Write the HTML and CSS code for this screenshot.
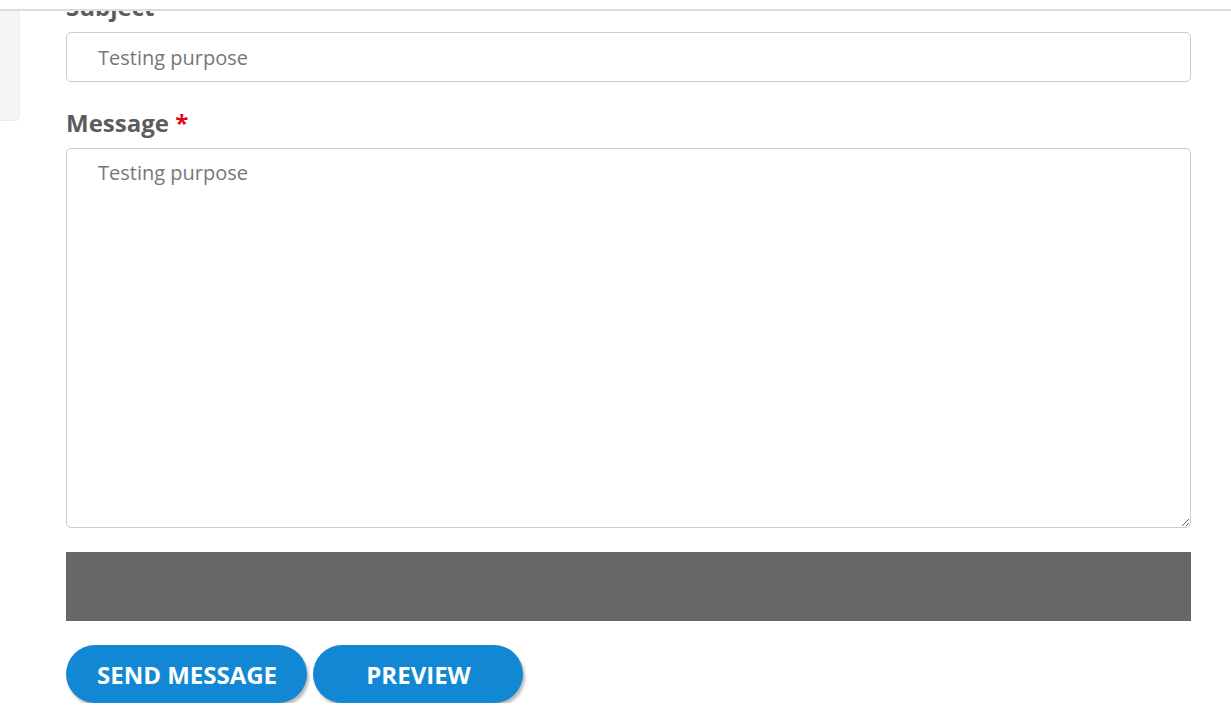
FILE: index.html
```html
<!DOCTYPE html>
<html lang="en">
<head>
<meta charset="utf-8">
<title>Contact form</title>
<link rel="stylesheet" href="styles.css">
</head>
<body>
<div class="topbar"></div>
<div class="page">
  <aside class="sidebar"></aside>
  <form class="form">
    <div class="group">
      <label class="label" for="subject">Subject</label>
      <input class="input" id="subject" type="text" value="Testing purpose">
    </div>
    <div class="group">
      <label class="label" for="message">Message <span class="req">*</span></label>
      <textarea class="textarea" id="message">Testing purpose</textarea>
    </div>
    <div class="captcha"></div>
    <div class="actions">
      <button type="button" class="btn">SEND MESSAGE</button>
      <button type="button" class="btn">PREVIEW</button>
    </div>
  </form>
</div>
</body>
</html>
```

FILE: styles.css
```css
html, body {
  margin: 0;
  padding: 0;
  background: #fff;
  font-family: "Open Sans", "Liberation Sans", sans-serif;
  overflow: hidden;
}

.topbar {
  position: fixed;
  top: 0;
  left: 0;
  right: 0;
  height: 9px;
  background: #fff;
  border-bottom: 2px solid #dcdcdc;
  z-index: 10;
}

.page {
  display: flex;
  align-items: flex-start;
  gap: 46px;
}

.sidebar {
  width: 19px;
  height: 109px;
  margin-top: 10px;
  background: #f5f5f5;
  border: 1px solid #ececec;
  border-left: none;
  border-radius: 0 5px 5px 0;
}

.form {
  width: 1125px;
  margin-top: -8px;
}

.group {
  margin-bottom: 26px;
}

.label {
  display: block;
  font-size: 24px;
  line-height: 29px;
  font-weight: 700;
  color: #5c5c5c;
  margin-bottom: 11px;
}

.req {
  color: #e30613;
}

.input,
.textarea {
  display: block;
  width: 100%;
  box-sizing: border-box;
  border: 1px solid #cccccc;
  border-radius: 5px;
  font-family: "Open Sans", "Liberation Sans", sans-serif;
  font-size: 20px;
  font-weight: 400;
  color: #777777;
  background: #fff;
  padding: 0 31px;
  margin: 0;
}

.input {
  height: 50px;
}

.textarea {
  height: 380px;
  padding-top: 12px;
  line-height: 24px;
  resize: both;
}

.captcha {
  height: 69px;
  background: #676767;
  margin-top: -2px;
}

.actions {
  display: flex;
  gap: 6px;
  margin-top: 24px;
}

.btn {
  height: 58px;
  min-width: 210px;
  padding: 0 30px 0 31px;
  border: none;
  border-radius: 29px;
  background: #1287d4;
  color: #fff;
  font-family: "Open Sans", "Liberation Sans", sans-serif;
  font-size: 24px;
  font-weight: 700;
  box-shadow: 2px 3px 3px rgba(0, 0, 0, 0.28);
  cursor: pointer;
}
```
